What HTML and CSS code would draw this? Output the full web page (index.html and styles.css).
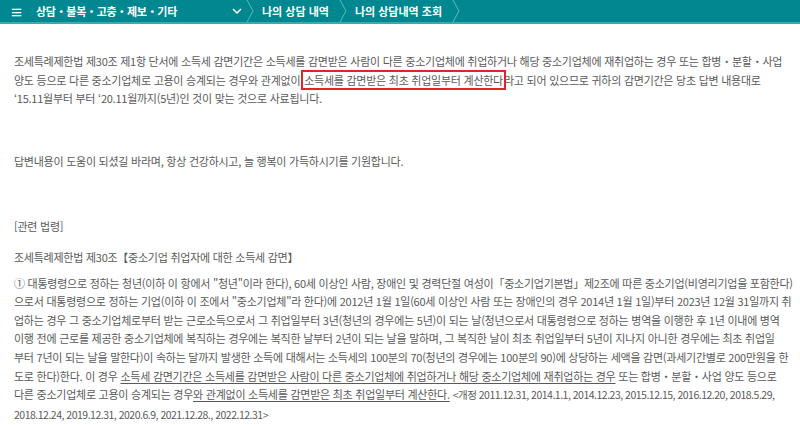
FILE: index.html
```html
<!DOCTYPE html>
<html lang="ko">
<head>
  <meta charset="UTF-8">
  <meta name="viewport" content="width=device-width, initial-scale=1.0">
  <title>나의 상담내역 조회</title>
  <link rel="stylesheet" href="styles.css">
</head>
<body>
  <!-- 상단 경로 바 -->
  <nav class="path-bar">
    <div class="path-menu">
      <span class="menu-icon">≡</span>
      <span class="menu-title">상담・불복・고충・제보・기타</span>
      <svg class="menu-caret" width="10" height="6" viewBox="0 0 10 6"><path d="M1 1l4 4 4-4" fill="none" stroke="#fff" stroke-width="1.5"/></svg>
    </div>
    <span class="path-sep"><svg width="8" height="22" viewBox="0 0 8 22"><path d="M1 0l6 11-6 11" fill="none" stroke="#5cb8bd" stroke-width="1"/></svg></span>
    <span class="path-item">나의 상담 내역</span>
    <span class="path-sep"><svg width="8" height="22" viewBox="0 0 8 22"><path d="M1 0l6 11-6 11" fill="none" stroke="#5cb8bd" stroke-width="1"/></svg></span>
    <span class="path-item">나의 상담내역 조회</span>
    <span class="path-sep"><svg width="8" height="22" viewBox="0 0 8 22"><path d="M1 0l6 11-6 11" fill="none" stroke="#5cb8bd" stroke-width="1"/></svg></span>
  </nav>

  <div class="answer">
    <p class="para first">
      조세특례제한법 제30조 제1항 단서에 소득세 감면기간은 소득세를 감면받은 사람이 다른 중소기업체에 취업하거나 해당 중소기업체에 재취업하는 경우 또는 합병・분할・사업<br>
      양도 등으로 다른 중소기업체로 고용이 승계되는 경우와 관계없이 <span class="mark">소득세를 감면받은 최초 취업일부터 계산한다</span>라고 되어 있으므로 귀하의 감면기간은 당초 답변 내용대로<br>
      ‘15.11월부터 부터 ‘20.11월까지(5년)인 것이 맞는 것으로 사료됩니다.
    </p>

    <p class="para greet">답변내용이 도움이 되셨길 바라며, 항상 건강하시고, 늘 행복이 가득하시기를 기원합니다.</p>

    <p class="para law-head">[관련 법령]</p>

    <p class="para law-title">조세특례제한법 제30조【중소기업 취업자에 대한 소득세 감면】</p>

    <p class="para law-body">
      ① 대통령령으로 정하는 청년(이하 이 항에서 "청년"이라 한다), 60세 이상인 사람, 장애인 및 경력단절 여성이「중소기업기본법」제2조에 따른 중소기업(비영리기업을 포함한다)<br>
      으로서 대통령령으로 정하는 기업(이하 이 조에서 "중소기업체"라 한다)에 2012년 1월 1일(60세 이상인 사람 또는 장애인의 경우 2014년 1월 1일)부터 2023년 12월 31일까지 취<br>
      업하는 경우 그 중소기업체로부터 받는 근로소득으로서 그 취업일부터 3년(청년의 경우에는 5년)이 되는 날(청년으로서 대통령령으로 정하는 병역을 이행한 후 1년 이내에 병역<br>
      이행 전에 근로를 제공한 중소기업체에 복직하는 경우에는 복직한 날부터 2년이 되는 날을 말하며, 그 복직한 날이 최초 취업일부터 5년이 지나지 아니한 경우에는 최초 취업일<br>
      부터 7년이 되는 날을 말한다)이 속하는 달까지 발생한 소득에 대해서는 소득세의 100분의 70(청년의 경우에는 100분의 90)에 상당하는 세액을 감면(과세기간별로 200만원을 한<br>
      도로 한다)한다. 이 경우 <u>소득세 감면기간은 소득세를 감면받은 사람이 다른 중소기업체에 취업하거나 해당 중소기업체에 재취업하는 경우</u> 또는 합병・분할・사업 양도 등으로<br>
      다른 중소기업체로 고용이 승계되는 경우<u>와 관계없이 소득세를 감면받은 최초 취업일부터 계산한다.</u> <span class="rev">&lt;개정 2011.12.31, 2014.1.1, 2014.12.23, 2015.12.15, 2016.12.20, 2018.5.29,</span><br>
      <span class="rev">2018.12.24, 2019.12.31, 2020.6.9, 2021.12.28., 2022.12.31&gt;</span>
    </p>
  </div>
</body>
</html>
```

FILE: styles.css
```css
html, body {
  margin: 0;
  padding: 0;
  background: #fff;
  font-family: "Malgun Gothic", "Noto Sans CJK KR", "Noto Sans", sans-serif;
  overflow: hidden;
}

/* 상단 경로 바 */
.path-bar {
  display: flex;
  align-items: center;
  height: 22px;
  background: #00878f;
  border-bottom: 2px solid #3fa9af;
  color: #fff;
  font-size: 11px;
  font-weight: bold;
}

.path-menu {
  display: flex;
  align-items: center;
  width: 246px;
  padding-left: 10px;
  box-sizing: border-box;
}

.menu-icon {
  font-size: 13px;
  margin-right: 13px;
}

.menu-title {
  flex: 1;
  letter-spacing: -0.3px;
}

.menu-caret {
  margin-right: 4px;
}

.path-sep {
  display: flex;
  height: 22px;
}

.path-item {
  padding: 0 10px 0 8px;
}

/* 답변 본문 */
.answer {
  padding: 0 14px;
  color: #5a5a5a;
  font-size: 11px;
  line-height: 18.6px;
  letter-spacing: -0.25px;
}

.para {
  margin: 0;
  white-space: nowrap;
}

.first { margin-top: 28px; }
.greet { margin-top: 44px; }
.law-head { margin-top: 47px; }
.law-title { margin-top: 12px; }
.law-body { margin-top: 7px; }

.mark {
  outline: 2px solid #e3222a;
  outline-offset: 0;
  padding: 0 1px;
}

/* 개정 이력은 숫자가 좁게 */
.rev {
  font-size: 10.5px;
  letter-spacing: -0.5px;
}

u {
  text-underline-offset: 2px;
}
```
